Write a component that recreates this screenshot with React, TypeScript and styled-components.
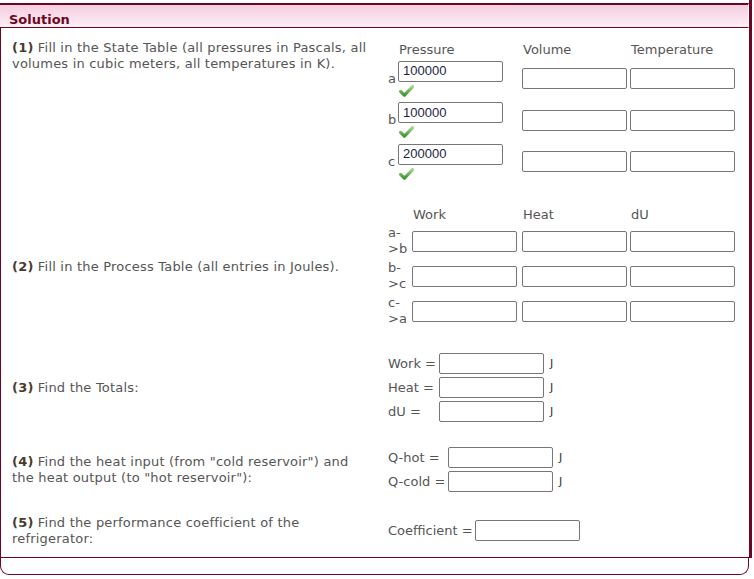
import styled, { createGlobalStyle } from "styled-components";
import { useId } from "react";

const DARK = "#6c0624";

const GlobalStyle = createGlobalStyle`
  html, body {
    margin: 0;
    padding: 0;
    background: #fff;
    font-family: "DejaVu Sans", Verdana, sans-serif;
  }
`;

const Frame = styled.div`
  width: 752px;
  box-sizing: border-box;
  padding-top: 3px;
  border-right: 3px solid ${DARK};
`;

const Header = styled.div`
  height: 22px;
  overflow: hidden;
  border-top: 2px solid ${DARK};
  border-bottom: 1px solid ${DARK};
  border-right: 1px solid #fff;
  background: linear-gradient(#f6cde0, #fdeff5);
  padding-left: 9px;
  font-size: 13px;
  font-weight: bold;
  line-height: 29px;
  color: ${DARK};
`;

const Body = styled.div`
  height: 530px;
  box-sizing: border-box;
  border-left: 1px solid ${DARK};
  border-bottom: 1px solid ${DARK};
  padding: 11px 0 0 11px;
  display: flex;
  flex-direction: column;
`;

const Footer = styled.div`
  width: 749px;
  height: 17px;
  box-sizing: border-box;
  border: 1px solid ${DARK};
  border-top: none;
  border-radius: 0 0 9px 9px;
`;

const Section = styled.div<{ $mt?: number; $align?: string }>`
  display: grid;
  grid-template-columns: 376px auto;
  align-items: ${(p) => p.$align ?? "center"};
  margin-top: ${(p) => p.$mt ?? 0}px;
`;

const Prompt = styled.div<{ $pt?: number }>`
  width: 358px;
  padding-top: ${(p) => p.$pt ?? 0}px;
  font-size: 13px;
  line-height: 16px;
  letter-spacing: 0.2px;
  color: #555;

  b {
    color: #463c34;
  }
`;

const Table = styled.div<{ $cols: string; $pt?: number }>`
  display: grid;
  grid-template-columns: ${(p) => p.$cols};
  align-items: center;
  padding-top: ${(p) => p.$pt ?? 0}px;
  font-size: 13px;
  color: #555;
`;

const HeadCell = styled.div<{ $h: number }>`
  height: ${(p) => p.$h}px;
  line-height: ${(p) => p.$h}px;
  padding-left: 1px;
`;

const RowLabel = styled.div`
  font-size: 13px;
  line-height: 16px;
  color: #555;
`;

const Cell = styled.div<{ $h: number }>`
  height: ${(p) => p.$h}px;
  display: flex;
  align-items: center;
`;

const PressureCell = styled.div`
  height: 41.5px;
  display: flex;
  flex-direction: column;
  justify-content: center;
  gap: 3px;
`;

const Field = styled.input`
  width: 105px;
  height: 21px;
  box-sizing: border-box;
  border: 1px solid #767676;
  border-radius: 2px;
  padding: 0 4px 1px;
  font-family: "Liberation Sans", Arial, sans-serif;
  font-size: 13px;
  color: #1d1d45;
  background: #fff;
  outline: none;
`;

const Unit = styled.span`
  margin-left: 6px;
  font-size: 11px;
  color: #333;
`;

const CheckWrap = styled.span`
  display: block;
  width: 15px;
  height: 12px;
  margin-left: 1px;
`;

function Check() {
  const id = useId();
  return (
    <CheckWrap>
      <svg width="15" height="12" viewBox="0 0 15 12">
        <defs>
          <linearGradient id={id} x1="0" y1="0" x2="0" y2="1">
            <stop offset="0" stopColor="#a2d886" />
            <stop offset="1" stopColor="#3d9434" />
          </linearGradient>
        </defs>
        <path
          d="M1.6 6.4 L5.4 10.2 L13.6 1.6"
          fill="none"
          stroke={`url(#${id})`}
          strokeWidth="3.2"
          strokeLinecap="round"
          strokeLinejoin="round"
        />
      </svg>
    </CheckWrap>
  );
}

const stateRows = [
  { label: "a", p: "100000" },
  { label: "b", p: "100000" },
  { label: "c", p: "200000" },
];

const processRows = ["a->b", "b->c", "c->a"];

function StateTable() {
  return (
    <Table $cols="10px 124px 108px 105px" $pt={2}>
      <span />
      <HeadCell $h={17}>Pressure</HeadCell>
      <HeadCell $h={17}>Volume</HeadCell>
      <HeadCell $h={17}>Temperature</HeadCell>
      {stateRows.map((r) => (
        <>
          <RowLabel key={r.label + "l"}>{r.label}</RowLabel>
          <PressureCell key={r.label + "p"}>
            <Field defaultValue={r.p} />
            <Check />
          </PressureCell>
          <Cell $h={41.5} key={r.label + "v"}>
            <Field />
          </Cell>
          <Cell $h={41.5} key={r.label + "t"}>
            <Field />
          </Cell>
        </>
      ))}
    </Table>
  );
}

function ProcessTable() {
  return (
    <Table $cols="24px 110px 108px 105px">
      <span />
      <HeadCell $h={18}>Work</HeadCell>
      <HeadCell $h={18}>Heat</HeadCell>
      <HeadCell $h={18}>dU</HeadCell>
      {processRows.map((r) => (
        <>
          <RowLabel key={r + "l"}>{r}</RowLabel>
          <Cell $h={35} key={r + "w"}>
            <Field />
          </Cell>
          <Cell $h={35} key={r + "h"}>
            <Field />
          </Cell>
          <Cell $h={35} key={r + "d"}>
            <Field />
          </Cell>
        </>
      ))}
    </Table>
  );
}

function EqTable({ labelWidth, rows, unit }: { labelWidth: number; rows: string[]; unit: boolean }) {
  return (
    <Table $cols={`${labelWidth}px auto`}>
      {rows.map((r) => (
        <>
          <RowLabel key={r + "l"}>{r} =</RowLabel>
          <Cell $h={24} key={r + "f"}>
            <Field />
            {unit && <Unit>J</Unit>}
          </Cell>
        </>
      ))}
    </Table>
  );
}

function App() {
  return (
    <>
      <GlobalStyle />
      <Frame>
        <Header>Solution</Header>
        <Body>
          <Section $align="start">
            <Prompt $pt={1}>
              <b>(1)</b> Fill in the State Table (all pressures in Pascals, all volumes in cubic
              meters, all temperatures in K).
            </Prompt>
            <StateTable />
          </Section>
          <Section $mt={23}>
            <Prompt>
              <b>(2)</b> Fill in the Process Table (all entries in Joules).
            </Prompt>
            <ProcessTable />
          </Section>
          <Section $mt={23}>
            <Prompt>
              <b>(3)</b> Find the Totals:
            </Prompt>
            <EqTable labelWidth={51} rows={["Work", "Heat", "dU"]} unit />
          </Section>
          <Section $mt={22}>
            <Prompt>
              <b>(4)</b> Find the heat input (from "cold reservoir") and the heat output (to "hot
              reservoir"):
            </Prompt>
            <EqTable labelWidth={60} rows={["Q-hot", "Q-cold"]} unit />
          </Section>
          <Section $mt={21}>
            <Prompt>
              <b>(5)</b> Find the performance coefficient of the refrigerator:
            </Prompt>
            <EqTable labelWidth={87} rows={["Coefficient"]} unit={false} />
          </Section>
        </Body>
      </Frame>
      <Footer />
    </>
  );
}

export default App;
